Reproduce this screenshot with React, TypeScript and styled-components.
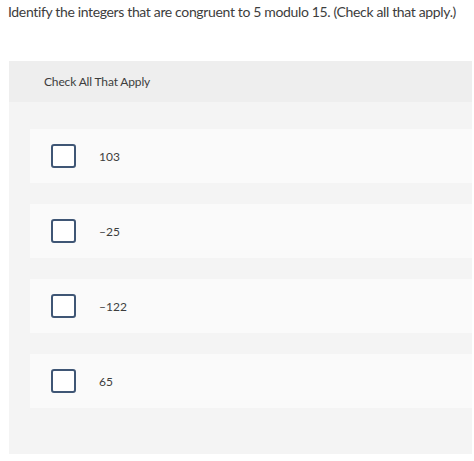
import React from 'react';
import styled, { createGlobalStyle } from 'styled-components';

const GlobalStyle = createGlobalStyle`
  body {
    margin: 0;
    background: #ffffff;
    font-family: Lato, "Liberation Sans", sans-serif;
    color: #3d3d3d;
  }
`;

const Page = styled.div`
  padding: 2px 2px 7px 0;
`;

const Question = styled.p`
  margin: 0 0 0 8px;
  font-size: 14px;
  letter-spacing: -0.35px;
  line-height: 20px;
  white-space: nowrap;
  color: #3d3d3d;
`;

const Panel = styled.section`
  margin: 39px 0 0 9px;
  background: #f4f4f4;
  padding-bottom: 46px;
`;

const PanelHeader = styled.div`
  display: flex;
  align-items: center;
  height: 41px;
  padding-left: 35px;
  background: #eeeeee;
  font-size: 12px;
  letter-spacing: -0.15px;
  color: #3d3d3d;
`;

const OptionList = styled.ul`
  list-style: none;
  margin: 0;
  padding: 27px 0 0 21px;
  display: flex;
  flex-direction: column;
  gap: 21px;
`;

const Option = styled.li`
  display: flex;
  align-items: center;
  gap: 23px;
  height: 54px;
  padding-left: 21px;
  background: #fafafa;
`;

const Box = styled.span`
  box-sizing: border-box;
  width: 25px;
  height: 24px;
  border: 2px solid #3f5675;
  border-radius: 3px;
  background: #ffffff;
`;

const Label = styled.span`
  font-size: 12px;
  color: #3d3d3d;
`;

const options = ['103', '\u201325', '\u2013122', '65'];

export default function App() {
  return (
    <Page>
      <GlobalStyle />
      <Question>Identify the integers that are congruent to 5 modulo 15. (Check all that apply.)</Question>
      <Panel>
        <PanelHeader>Check All That Apply</PanelHeader>
        <OptionList>
          {options.map((opt) => (
            <Option key={opt}>
              <Box />
              <Label>{opt}</Label>
            </Option>
          ))}
        </OptionList>
      </Panel>
    </Page>
  );
}
